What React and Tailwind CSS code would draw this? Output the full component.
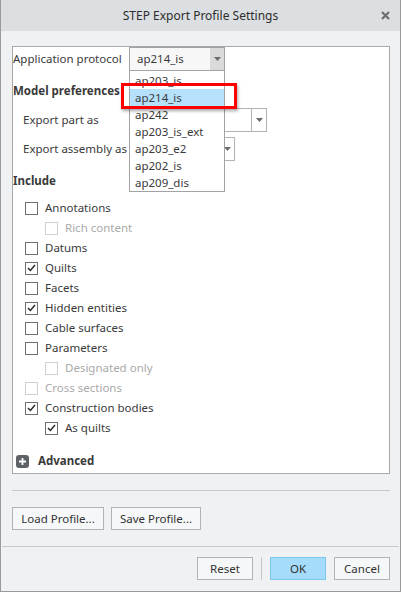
import React from 'react';

const font = { fontFamily: '"Noto Sans", "Open Sans", Arial, sans-serif' };

const protocols = ['ap203_is', 'ap214_is', 'ap242', 'ap203_is_ext', 'ap203_e2', 'ap202_is', 'ap209_dis'];

const includeRows = [
  { label: 'Annotations', checked: false },
  { label: 'Rich content', indent: true, disabled: true },
  { label: 'Datums' },
  { label: 'Quilts', checked: true },
  { label: 'Facets' },
  { label: 'Hidden entities', checked: true },
  { label: 'Cable surfaces' },
  { label: 'Parameters' },
  { label: 'Designated only', indent: true, disabled: true },
  { label: 'Cross sections', disabled: true },
  { label: 'Construction bodies', checked: true },
  { label: 'As quilts', indent: true, checked: true },
];

const Arrow = () => (
  <svg width="7" height="4" viewBox="0 0 7 4">
    <path d="M0 0 H7 L3.5 4 Z" fill="#6b6b6b" />
  </svg>
);

const Check = ({ checked, disabled }) => (
  <span
    className={`flex h-[13px] w-[13px] shrink-0 items-center justify-center border bg-white ${
      disabled ? 'border-[#cfcfcf]' : 'border-[#6f6f6f]'
    }`}
  >
    {checked && (
      <svg width="9" height="8" viewBox="0 0 9 8">
        <path d="M1 4 L3.4 6.5 L8 1" fill="none" stroke="#2b2b2b" strokeWidth="1.5" />
      </svg>
    )}
  </span>
);

const Btn = ({ children, className = '' }) => (
  <button
    className={`flex h-[23px] items-center justify-center border border-[#b3b3b3] bg-[#f6f7f8] text-[11.5px] text-[#333] ${className}`}
  >
    {children}
  </button>
);

export default function App() {
  return (
    <div
      style={font}
      className="flex h-[592px] w-[401px] flex-col border-x border-b border-[#9a9a9a] bg-[#f0f1f3] text-[11.5px] text-[#3a3a3a]"
    >
      {/* barre de titre */}
      <div className="relative flex h-[31px] shrink-0 items-center justify-center bg-[#dcdfe1] text-[12px] text-[#2d2d2d]">
        STEP Export Profile Settings
        <svg className="absolute right-[10px] top-[11px]" width="9" height="9" viewBox="0 0 9 9">
          <path d="M1 1 L8 8 M8 1 L1 8" stroke="#6e6e6e" strokeWidth="2.2" />
        </svg>
      </div>

      <div className="pl-[11px] pt-[15px]">
        <div className="relative flex h-[428px] w-[378px] flex-col border border-[#a9a9a9] bg-white">
          {/* protocole */}
          <div className="flex h-[23px] items-center whitespace-nowrap">
            <span className="w-[116px]">Application protocol</span>
            <div className="flex h-[24px] w-[96px] items-stretch border border-[#a3a3a3] bg-[#f7f7f7]">
              <span className="flex flex-1 items-center pl-[7px]">ap214_is</span>
              <span className="flex w-[14px] items-center justify-center bg-[#dadada]">
                <Arrow />
              </span>
            </div>
          </div>

          <div className="mt-[10px] flex h-[22px] items-center font-bold">Model preferences</div>

          <div className="mt-[6px] flex h-[24px] items-center whitespace-nowrap">
            <span className="w-[116px] pl-[10px]">Export part as</span>
            <div className="flex h-[24px] w-[138px] items-stretch border border-[#b3b3b3] bg-white">
              <span className="flex-1" />
              <span className="flex w-[15px] items-center justify-center border-l border-[#b3b3b3]">
                <Arrow />
              </span>
            </div>
          </div>

          <div className="mt-[5px] flex h-[24px] items-center whitespace-nowrap">
            <span className="w-[116px] pl-[10px]">Export assembly as</span>
            <div className="flex h-[24px] w-[106px] items-stretch border border-[#b3b3b3] bg-white">
              <span className="flex-1" />
              <span className="flex w-[13px] items-center justify-center">
                <Arrow />
              </span>
            </div>
          </div>

          <div className="mt-[9px] flex h-[22px] items-center font-bold">Include</div>

          <div className="mt-[6px] flex flex-col">
            {includeRows.map((r) => (
              <div
                key={r.label}
                className={`flex h-[20px] items-center gap-[7px] ${r.indent ? 'pl-[32px]' : 'pl-[12px]'} ${
                  r.disabled ? 'text-[#a9a9a9]' : ''
                }`}
              >
                <Check checked={r.checked} disabled={r.disabled} />
                <span>{r.label}</span>
              </div>
            ))}
          </div>

          <div className="mt-[13px] flex h-[20px] items-center gap-[9px] pl-[3px] font-bold">
            <span className="flex h-[13px] w-[13px] items-center justify-center rounded-[3px] bg-[#5e6166]">
              <svg width="9" height="9" viewBox="0 0 9 9">
                <path d="M4.5 1 V8 M1 4.5 H8" stroke="#fff" strokeWidth="1.8" />
              </svg>
            </span>
            Advanced
          </div>

          {/* liste déroulante ouverte */}
          <div className="absolute left-[116px] top-[23px] w-[96px] border border-[#a3a3a3] bg-white pt-[1px]">
            {protocols.map((p, i) => (
              <div
                key={p}
                className={`flex h-[17px] items-center pl-[5px] ${i === 1 ? 'bg-[#b5e1fa]' : ''}`}
              >
                {p}
              </div>
            ))}
          </div>

          {/* cadre rouge */}
          <div className="absolute left-[108px] top-[36px] h-[26px] w-[116px] border-[3px] border-[#ff0000] shadow-[1px_2px_3px_rgba(0,0,0,0.35)]" />
        </div>
      </div>

      <div className="ml-[11px] mt-[16px] h-px w-[378px] bg-[#c9c9c9]" />

      <div className="ml-[11px] mt-[16px] flex gap-[7px]">
        <Btn className="w-[92px]">Load Profile...</Btn>
        <Btn className="w-[90px]">Save Profile...</Btn>
      </div>

      <div className="ml-[1px] mt-[16px] h-px w-[397px] bg-[#c9c9c9]" />

      <div className="mt-[10px] flex items-center justify-end pr-[10px]">
        <Btn className="w-[56px]">Reset</Btn>
        <span className="mx-[8px] h-[23px] w-px bg-[#c9c9c9]" />
        <Btn className="w-[56px] !border-[#7cc6ef] !bg-[#a5dcfb]">OK</Btn>
        <Btn className="ml-[8px] w-[56px]">Cancel</Btn>
      </div>
    </div>
  );
}
